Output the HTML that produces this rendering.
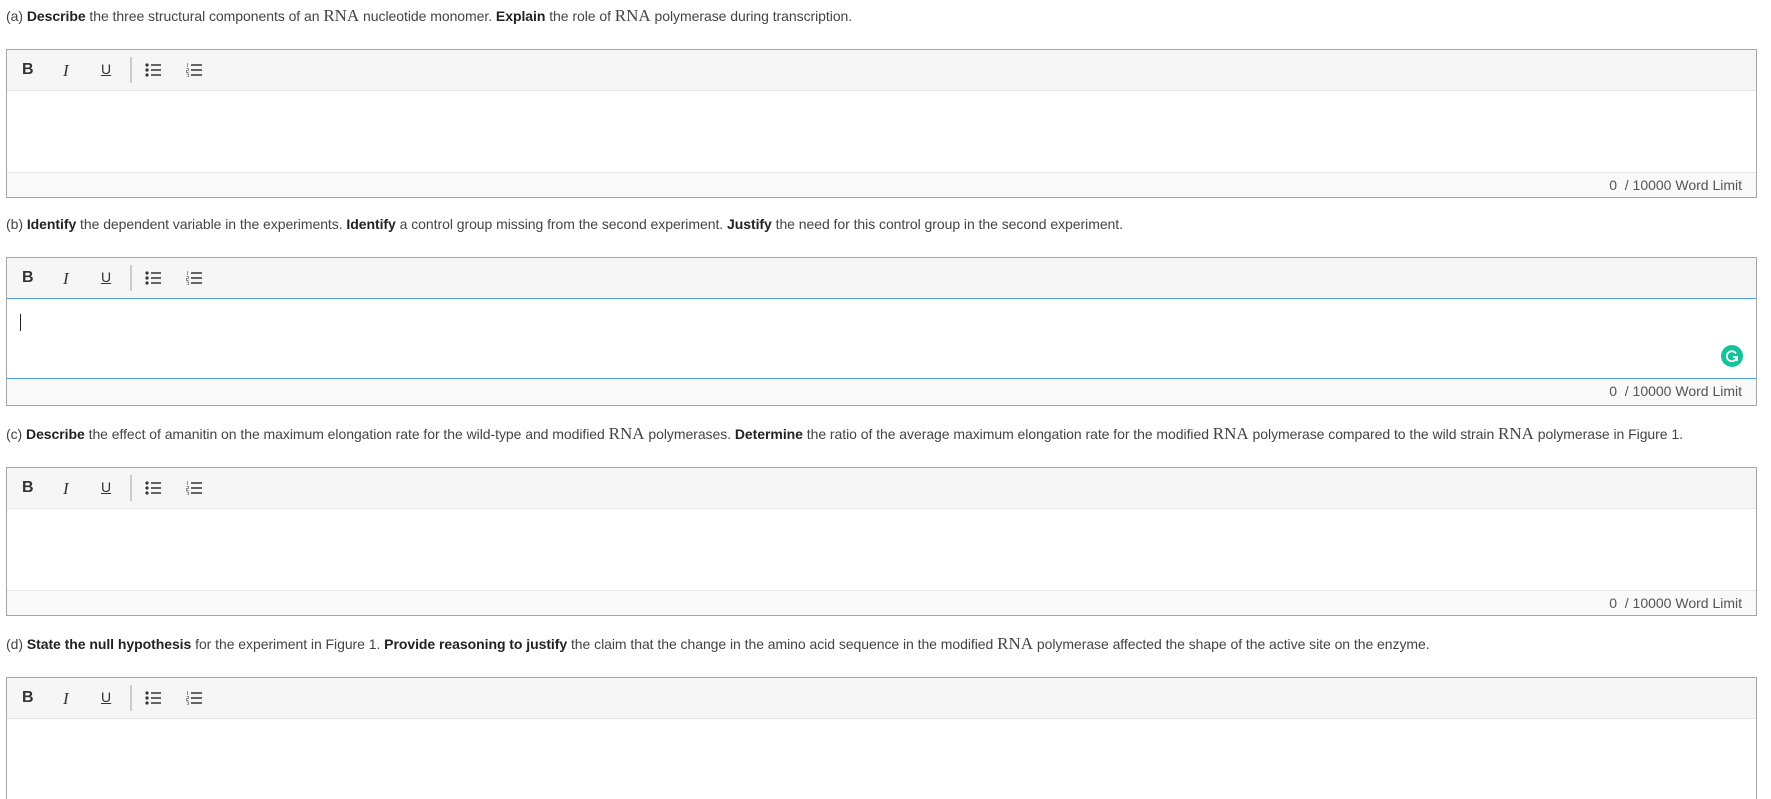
<!DOCTYPE html>
<html><head><meta charset="utf-8"><style>
*{box-sizing:border-box;margin:0;padding:0}
html{width:1771px;height:799px;overflow:hidden}
body{width:1771px;height:799px;overflow:hidden;background:#fff;font-family:"Liberation Sans",Arial,sans-serif;color:#444;position:relative}
.q{position:absolute;left:6px;font-size:14px;line-height:20px;white-space:nowrap;letter-spacing:-0.05px}
.q b{color:#222;font-weight:bold}
.m{font-family:"Liberation Serif",serif;font-size:17px;letter-spacing:0}
.box{position:absolute;left:6px;width:1751px;height:149px;border:1px solid #a5a5a5;background:#fff;overflow:hidden}
.tb{height:41px;background:#f6f6f6;border-bottom:1px solid #e6e6e6;position:relative}
.body{height:81px;position:relative}
.ft{height:25px;background:#f9f9f9;border-top:1px solid #e6e6e6;text-align:right;padding-right:14px;font-size:14px;line-height:24px;color:#555}
.ic{position:absolute;top:11px;font-size:16px;color:#333}
.sep{position:absolute;left:123px;top:7px;width:2px;height:26px;background:#ccc}
.active .body{border:1px solid #4aa3e8;margin:-1px -1px 0 -1px}
</style></head><body>

<div class="q" style="top:6px">(a) <b>Describe</b> the three structural components of an <span class="m">RNA</span> nucleotide monomer. <b>Explain</b> the role of <span class="m">RNA</span> polymerase during transcription.</div>
<div class="box" style="top:49px">
 <div class="tb">
  <span class="ic" style="left:15px;font-weight:bold">B</span>
  <span class="ic" style="left:56px;font-style:italic;font-family:'Liberation Serif',serif;font-size:17px">I</span>
  <span class="ic" style="left:94px;font-size:14px;text-decoration:underline">U</span>
  <div class="sep"></div>
  <svg class="ic" style="left:138px;top:13px" width="16" height="14" viewBox="0 0 16 14"><circle cx="2" cy="2" r="1.6" fill="#333"/><circle cx="2" cy="7" r="1.6" fill="#333"/><circle cx="2" cy="12" r="1.6" fill="#333"/><path d="M6 2h10M6 7h10M6 12h10" stroke="#333" stroke-width="1.6"/></svg>
  <svg class="ic" style="left:179px;top:13px" width="16" height="14" viewBox="0 0 16 14"><path d="M1.5 0v4M0.5 5.5h2v2h-2v2h2M0.5 11h2v3h-2" stroke="#666" stroke-width="0.7" fill="none"/><path d="M5 2h11M5 7h11M5 12h11" stroke="#333" stroke-width="1.6"/></svg>
 </div>
 <div class="body"></div>
 <div class="ft">0 &nbsp;/ 10000 Word Limit</div>
</div>

<div class="q" style="top:214px">(b) <b>Identify</b> the dependent variable in the experiments. <b>Identify</b> a control group missing from the second experiment. <b>Justify</b> the need for this control group in the second experiment.</div>
<div class="box active" style="top:257px">
 <div class="tb" style="border-bottom:none">
  <span class="ic" style="left:15px;font-weight:bold">B</span>
  <span class="ic" style="left:56px;font-style:italic;font-family:'Liberation Serif',serif;font-size:17px">I</span>
  <span class="ic" style="left:94px;font-size:14px;text-decoration:underline">U</span>
  <div class="sep"></div>
  <svg class="ic" style="left:138px;top:13px" width="16" height="14" viewBox="0 0 16 14"><circle cx="2" cy="2" r="1.6" fill="#333"/><circle cx="2" cy="7" r="1.6" fill="#333"/><circle cx="2" cy="12" r="1.6" fill="#333"/><path d="M6 2h10M6 7h10M6 12h10" stroke="#333" stroke-width="1.6"/></svg>
  <svg class="ic" style="left:179px;top:13px" width="16" height="14" viewBox="0 0 16 14"><path d="M1.5 0v4M0.5 5.5h2v2h-2v2h2M0.5 11h2v3h-2" stroke="#666" stroke-width="0.7" fill="none"/><path d="M5 2h11M5 7h11M5 12h11" stroke="#333" stroke-width="1.6"/></svg>
 </div>
 <div class="body">
  <div style="position:absolute;left:13px;top:15px;width:1px;height:17px;background:#222"></div>
  <svg style="position:absolute;left:1714px;top:46px" width="22" height="22" viewBox="0 0 22 22"><circle cx="11" cy="11" r="11" fill="#15c39a"/><path d="M15 8.5A5 5 0 1 0 15.5 13" stroke="#fff" stroke-width="1.8" fill="none"/><path d="M12 12h4v4" stroke="#fff" stroke-width="1.8" fill="none"/></svg>
 </div>
 <div class="ft" style="border-top:none">0 &nbsp;/ 10000 Word Limit</div>
</div>

<div class="q" style="top:424px">(c) <b>Describe</b> the effect of amanitin on the maximum elongation rate for the wild-type and modified <span class="m">RNA</span> polymerases. <b>Determine</b> the ratio of the average maximum elongation rate for the modified <span class="m">RNA</span> polymerase compared to the wild strain <span class="m">RNA</span> polymerase in Figure 1.</div>
<div class="box" style="top:467px">
 <div class="tb">
  <span class="ic" style="left:15px;font-weight:bold">B</span>
  <span class="ic" style="left:56px;font-style:italic;font-family:'Liberation Serif',serif;font-size:17px">I</span>
  <span class="ic" style="left:94px;font-size:14px;text-decoration:underline">U</span>
  <div class="sep"></div>
  <svg class="ic" style="left:138px;top:13px" width="16" height="14" viewBox="0 0 16 14"><circle cx="2" cy="2" r="1.6" fill="#333"/><circle cx="2" cy="7" r="1.6" fill="#333"/><circle cx="2" cy="12" r="1.6" fill="#333"/><path d="M6 2h10M6 7h10M6 12h10" stroke="#333" stroke-width="1.6"/></svg>
  <svg class="ic" style="left:179px;top:13px" width="16" height="14" viewBox="0 0 16 14"><path d="M1.5 0v4M0.5 5.5h2v2h-2v2h2M0.5 11h2v3h-2" stroke="#666" stroke-width="0.7" fill="none"/><path d="M5 2h11M5 7h11M5 12h11" stroke="#333" stroke-width="1.6"/></svg>
 </div>
 <div class="body"></div>
 <div class="ft">0 &nbsp;/ 10000 Word Limit</div>
</div>

<div class="q" style="top:634px">(d) <b>State the null hypothesis</b> for the experiment in Figure 1. <b>Provide reasoning to justify</b> the claim that the change in the amino acid sequence in the modified <span class="m">RNA</span> polymerase affected the shape of the active site on the enzyme.</div>
<div class="box" style="top:677px;height:130px">
 <div class="tb">
  <span class="ic" style="left:15px;font-weight:bold">B</span>
  <span class="ic" style="left:56px;font-style:italic;font-family:'Liberation Serif',serif;font-size:17px">I</span>
  <span class="ic" style="left:94px;font-size:14px;text-decoration:underline">U</span>
  <div class="sep"></div>
  <svg class="ic" style="left:138px;top:13px" width="16" height="14" viewBox="0 0 16 14"><circle cx="2" cy="2" r="1.6" fill="#333"/><circle cx="2" cy="7" r="1.6" fill="#333"/><circle cx="2" cy="12" r="1.6" fill="#333"/><path d="M6 2h10M6 7h10M6 12h10" stroke="#333" stroke-width="1.6"/></svg>
  <svg class="ic" style="left:179px;top:13px" width="16" height="14" viewBox="0 0 16 14"><path d="M1.5 0v4M0.5 5.5h2v2h-2v2h2M0.5 11h2v3h-2" stroke="#666" stroke-width="0.7" fill="none"/><path d="M5 2h11M5 7h11M5 12h11" stroke="#333" stroke-width="1.6"/></svg>
 </div>
 <div class="body"></div>
</div>

</body></html>
